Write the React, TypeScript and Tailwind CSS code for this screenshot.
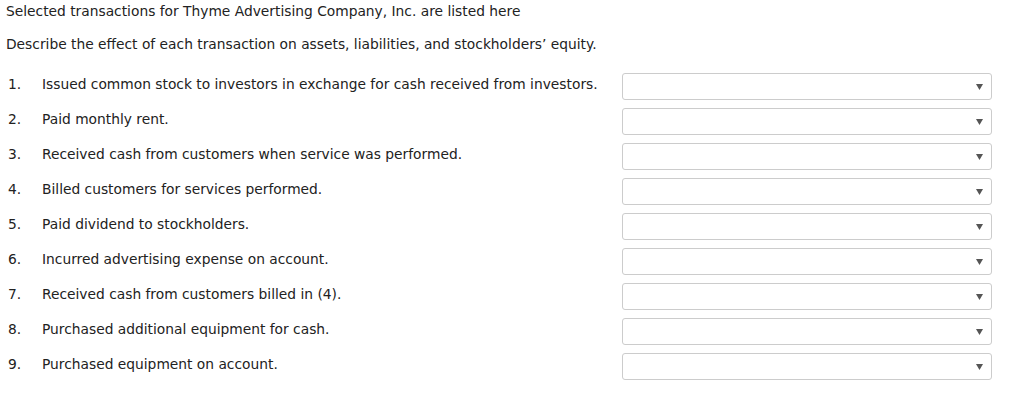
const items = [
  'Issued common stock to investors in exchange for cash received from investors.',
  'Paid monthly rent.',
  'Received cash from customers when service was performed.',
  'Billed customers for services performed.',
  'Paid dividend to stockholders.',
  'Incurred advertising expense on account.',
  'Received cash from customers billed in (4).',
  'Purchased additional equipment for cash.',
  'Purchased equipment on account.',
];

export default function App() {
  return (
    <div
      className="w-[1024px] h-[400px] bg-white text-[#222] text-[13.8px] leading-[16px] px-[6px] pt-[3px]"
      style={{ fontFamily: '"DejaVu Sans", Verdana, sans-serif' }}
    >
      <p>Selected transactions for Thyme Advertising Company, Inc. are listed here</p>
      <p className="mt-[17px]">Describe the effect of each transaction on assets, liabilities, and stockholders’ equity.</p>

      <div className="mt-[21px] flex flex-col gap-[8px]">
        {items.map((text, i) => (
          <div key={i} className="flex items-center h-[27px]">
            <span className="w-[36px] pl-[2px] -mt-[5px]">{i + 1}.</span>
            <span className="w-[580px] -mt-[5px]">{text}</span>
            <div className="w-[370px] h-[27px] border border-[#ccc] rounded-[3px] bg-white flex items-center justify-end pr-[8px]">
              <svg width="7" height="6" viewBox="0 0 7 6">
                <path d="M0 0h7L3.5 6z" fill="#555" />
              </svg>
            </div>
          </div>
        ))}
      </div>
    </div>
  );
}
